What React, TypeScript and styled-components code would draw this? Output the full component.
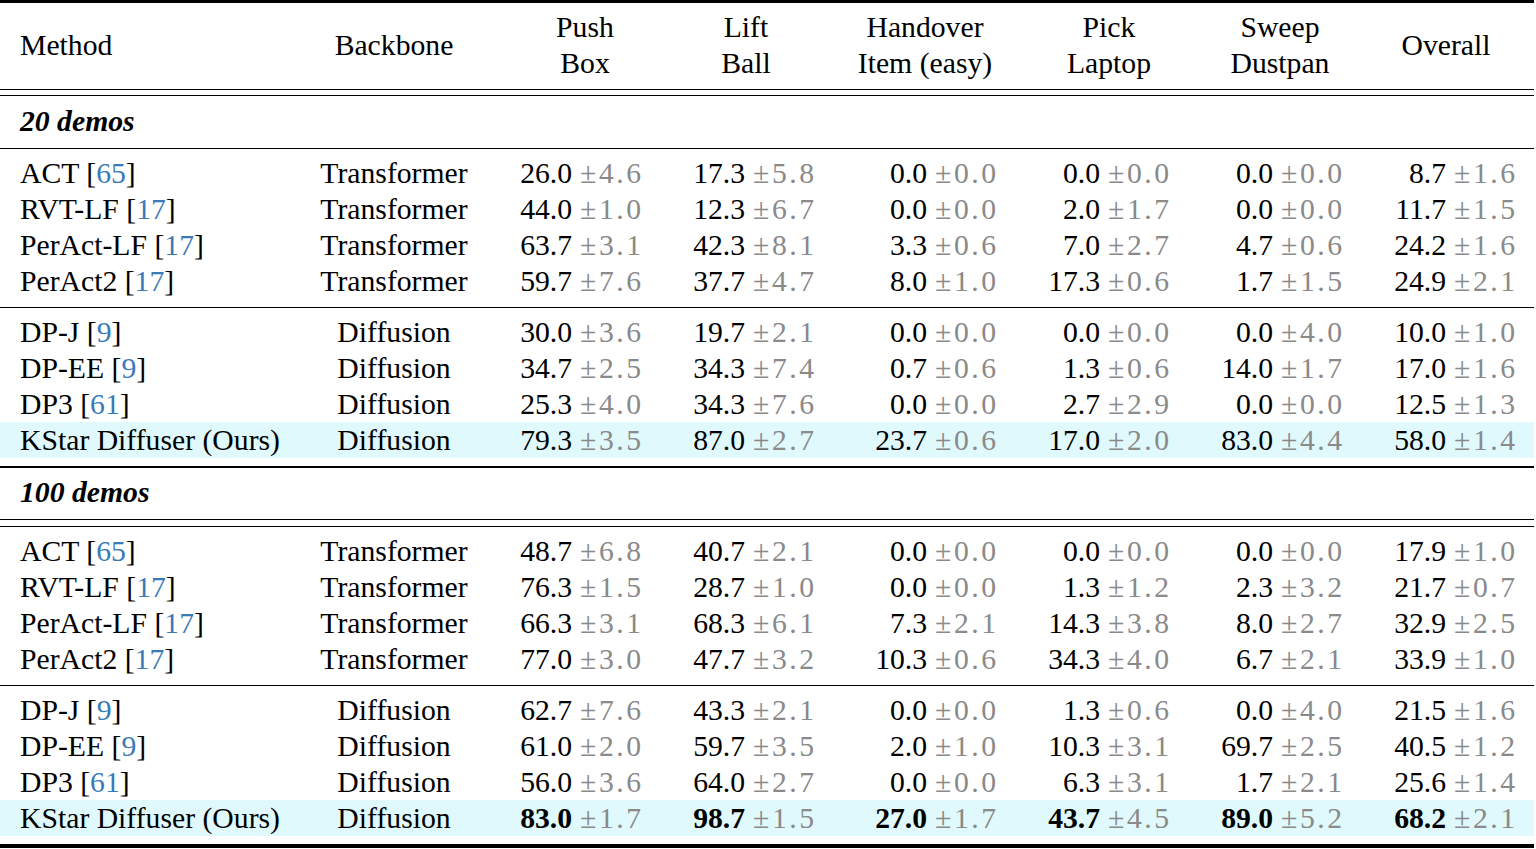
import React from 'react';
import styled, { createGlobalStyle } from 'styled-components';

const GlobalStyle = createGlobalStyle`
  html, body {
    margin: 0;
    padding: 0;
    background: #ffffff;
  }
`;

// column tracks: Method, Backbone, then the six task columns
const COLS = '288px 212px 170px 152px 206px 162px 180px 164px';
// right padding of numbers in each task column (values are right aligned)
const NUM_PAD = [29, 8, 32, 21, 28, 19];

const Table = styled.div`
  width: 1534px;
  border-top: 3px solid #000;
  border-bottom: 4px solid #000;
  font-family: "Liberation Serif", "Times New Roman", serif;
  font-size: 29.7px;
  line-height: 36px;
  color: #000;
`;

const Row = styled.div<{ $hl?: boolean }>`
  display: grid;
  grid-template-columns: ${COLS};
  background: ${p => (p.$hl ? '#e0f9fc' : 'transparent')};
  white-space: nowrap;
`;

const HeadRow = styled(Row)`
  padding: 6px 0 8px;
`;

const HeadCell = styled.div<{ $align?: 'left' | 'center'; $pr?: number }>`
  align-self: center;
  text-align: ${p => p.$align || 'center'};
  padding-left: ${p => (p.$align === 'left' ? 20 : 0)}px;
  padding-right: ${p => p.$pr || 0}px;
`;

const DoubleRule = styled.div<{ $gap: number }>`
  height: ${p => p.$gap}px;
  border-top: 1px solid #000;
  border-bottom: 1px solid #000;
`;

const SectionLabel = styled.div<{ $top: number; $rule: number }>`
  padding: ${p => p.$top}px 20px 9px;
  font-weight: bold;
  font-style: italic;
  border-bottom: ${p => p.$rule}px solid #000;
`;

const Group = styled.div<{ $rule: number }>`
  padding: 6px 0 8px;
  border-bottom: ${p => p.$rule}px solid #000;
`;

const MethodCell = styled.div`
  padding-left: 20px;
`;

const Cite = styled.span`
  color: #3a7ab8;
`;

const BackboneCell = styled.div`
  text-align: center;
`;

const NumCell = styled.div<{ $pr: number }>`
  text-align: right;
  padding-right: ${p => p.$pr}px;
`;

const Val = styled.span<{ $bold?: boolean }>`
  font-weight: ${p => (p.$bold ? 'bold' : 'normal')};
`;

// the ± part is set in a lighter, wider math face in the original
const Pm = styled.span`
  color: #8a8a8a;
  letter-spacing: 2.5px;
  margin-left: 8px;
  margin-right: -2.5px;
`;

type Entry = {
  name: string;
  cite?: string;
  backbone: string;
  vals: [string, string][];
  hl?: boolean;
  bold?: boolean;
};

const demos20: Entry[][] = [
  [
    { name: 'ACT', cite: '65', backbone: 'Transformer', vals: [['26.0', '4.6'], ['17.3', '5.8'], ['0.0', '0.0'], ['0.0', '0.0'], ['0.0', '0.0'], ['8.7', '1.6']] },
    { name: 'RVT-LF', cite: '17', backbone: 'Transformer', vals: [['44.0', '1.0'], ['12.3', '6.7'], ['0.0', '0.0'], ['2.0', '1.7'], ['0.0', '0.0'], ['11.7', '1.5']] },
    { name: 'PerAct-LF', cite: '17', backbone: 'Transformer', vals: [['63.7', '3.1'], ['42.3', '8.1'], ['3.3', '0.6'], ['7.0', '2.7'], ['4.7', '0.6'], ['24.2', '1.6']] },
    { name: 'PerAct2', cite: '17', backbone: 'Transformer', vals: [['59.7', '7.6'], ['37.7', '4.7'], ['8.0', '1.0'], ['17.3', '0.6'], ['1.7', '1.5'], ['24.9', '2.1']] },
  ],
  [
    { name: 'DP-J', cite: '9', backbone: 'Diffusion', vals: [['30.0', '3.6'], ['19.7', '2.1'], ['0.0', '0.0'], ['0.0', '0.0'], ['0.0', '4.0'], ['10.0', '1.0']] },
    { name: 'DP-EE', cite: '9', backbone: 'Diffusion', vals: [['34.7', '2.5'], ['34.3', '7.4'], ['0.7', '0.6'], ['1.3', '0.6'], ['14.0', '1.7'], ['17.0', '1.6']] },
    { name: 'DP3', cite: '61', backbone: 'Diffusion', vals: [['25.3', '4.0'], ['34.3', '7.6'], ['0.0', '0.0'], ['2.7', '2.9'], ['0.0', '0.0'], ['12.5', '1.3']] },
    { name: 'KStar Diffuser (Ours)', backbone: 'Diffusion', hl: true, vals: [['79.3', '3.5'], ['87.0', '2.7'], ['23.7', '0.6'], ['17.0', '2.0'], ['83.0', '4.4'], ['58.0', '1.4']] },
  ],
];

const demos100: Entry[][] = [
  [
    { name: 'ACT', cite: '65', backbone: 'Transformer', vals: [['48.7', '6.8'], ['40.7', '2.1'], ['0.0', '0.0'], ['0.0', '0.0'], ['0.0', '0.0'], ['17.9', '1.0']] },
    { name: 'RVT-LF', cite: '17', backbone: 'Transformer', vals: [['76.3', '1.5'], ['28.7', '1.0'], ['0.0', '0.0'], ['1.3', '1.2'], ['2.3', '3.2'], ['21.7', '0.7']] },
    { name: 'PerAct-LF', cite: '17', backbone: 'Transformer', vals: [['66.3', '3.1'], ['68.3', '6.1'], ['7.3', '2.1'], ['14.3', '3.8'], ['8.0', '2.7'], ['32.9', '2.5']] },
    { name: 'PerAct2', cite: '17', backbone: 'Transformer', vals: [['77.0', '3.0'], ['47.7', '3.2'], ['10.3', '0.6'], ['34.3', '4.0'], ['6.7', '2.1'], ['33.9', '1.0']] },
  ],
  [
    { name: 'DP-J', cite: '9', backbone: 'Diffusion', vals: [['62.7', '7.6'], ['43.3', '2.1'], ['0.0', '0.0'], ['1.3', '0.6'], ['0.0', '4.0'], ['21.5', '1.6']] },
    { name: 'DP-EE', cite: '9', backbone: 'Diffusion', vals: [['61.0', '2.0'], ['59.7', '3.5'], ['2.0', '1.0'], ['10.3', '3.1'], ['69.7', '2.5'], ['40.5', '1.2']] },
    { name: 'DP3', cite: '61', backbone: 'Diffusion', vals: [['56.0', '3.6'], ['64.0', '2.7'], ['0.0', '0.0'], ['6.3', '3.1'], ['1.7', '2.1'], ['25.6', '1.4']] },
    { name: 'KStar Diffuser (Ours)', backbone: 'Diffusion', hl: true, bold: true, vals: [['83.0', '1.7'], ['98.7', '1.5'], ['27.0', '1.7'], ['43.7', '4.5'], ['89.0', '5.2'], ['68.2', '2.1']] },
  ],
];

const DataRow: React.FC<{ entry: Entry }> = ({ entry }) => (
  <Row $hl={entry.hl}>
    <MethodCell>
      {entry.name}
      {entry.cite && (
        <>
          {' ['}
          <Cite>{entry.cite}</Cite>
          {']'}
        </>
      )}
    </MethodCell>
    <BackboneCell>{entry.backbone}</BackboneCell>
    {entry.vals.map(([v, s], i) => (
      <NumCell key={i} $pr={NUM_PAD[i]}>
        <Val $bold={entry.bold}>{v}</Val>
        <Pm>±{s}</Pm>
      </NumCell>
    ))}
  </Row>
);

const App: React.FC = () => {
  return (
    <>
      <GlobalStyle />
      <Table>
        <HeadRow>
          <HeadCell $align="left">Method</HeadCell>
          <HeadCell>Backbone</HeadCell>
          <HeadCell>Push<br />Box</HeadCell>
          <HeadCell>Lift<br />Ball</HeadCell>
          <HeadCell>Handover<br />Item (easy)</HeadCell>
          <HeadCell>Pick<br />Laptop</HeadCell>
          <HeadCell>Sweep<br />Dustpan</HeadCell>
          <HeadCell $pr={12}>Overall</HeadCell>
        </HeadRow>
        <DoubleRule $gap={5} />
        <SectionLabel $top={7} $rule={1}>20 demos</SectionLabel>
        {demos20.map((group, gi) => (
          <Group key={gi} $rule={gi === 0 ? 1 : 2}>
            {group.map((e, i) => (
              <DataRow key={i} entry={e} />
            ))}
          </Group>
        ))}
        <SectionLabel $top={6} $rule={0}>100 demos</SectionLabel>
        <DoubleRule $gap={6} />
        {demos100.map((group, gi) => (
          <Group key={gi} $rule={gi === 0 ? 1 : 0}>
            {group.map((e, i) => (
              <DataRow key={i} entry={e} />
            ))}
          </Group>
        ))}
      </Table>
    </>
  );
};

export default App;
